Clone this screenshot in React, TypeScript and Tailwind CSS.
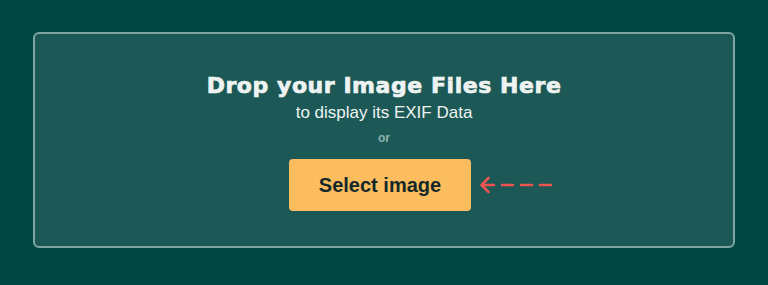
import React from "react";

function DashedArrow() {
  return (
    <svg width="74" height="18" viewBox="0 0 74 18" fill="none" className="shrink-0">
      <path d="M8.5 2 L1.5 9 L8.5 16" stroke="#ef5350" strokeWidth="2.5" strokeLinecap="round" strokeLinejoin="round" />
      <path d="M3 9 H72" stroke="#ef5350" strokeWidth="2.5" strokeLinecap="round" strokeDasharray="11 8" />
    </svg>
  );
}

export default function App() {
  return (
    <div className="w-full h-[285px] bg-[#004843] px-[33px] pt-[32px]" style={{ fontFamily: '"Liberation Sans", Arial, sans-serif' }}>
      <div className="h-[216px] rounded-[6px] border-2 border-[#7ea5a2] bg-[#1c5956] flex flex-col items-center pt-[39px]">
        <h1 className="text-[22px] leading-[26px] font-bold text-[#eef3f2] font-['DejaVu_Sans',sans-serif] tracking-[0.55px] [-webkit-text-stroke:0.7px_#eef3f2]">Drop your Image Files Here</h1>
        <p className="text-[17px] leading-[20px] text-[#eef3f2] mt-[4px]">to display its EXIF Data</p>
        <p className="text-[12px] leading-[14px] font-bold text-[#8fb0ad] mt-[8px]">or</p>
        <div className="flex items-center gap-[9px] mt-[14px] ml-[75px]">
          <button className="w-[182px] h-[52px] rounded-[4px] bg-[#fbbd5e] text-[20px] font-bold text-[#14282a]">Select image</button>
          <DashedArrow />
        </div>
      </div>
    </div>
  );
}
